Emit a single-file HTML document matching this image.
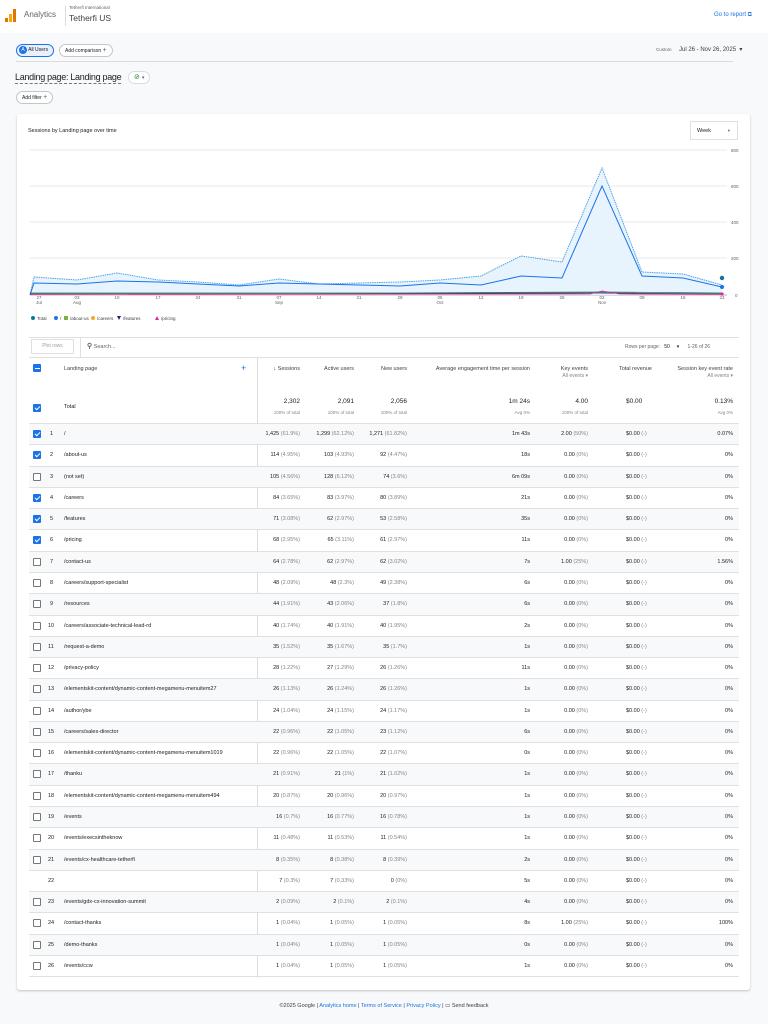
<!DOCTYPE html>
<html><head><meta charset="utf-8"><style>
*{box-sizing:border-box;margin:0;padding:0}
body{width:768px;height:1024px;background:#f8f9fa;font-family:"Liberation Sans",sans-serif;color:#202124;position:relative;overflow:hidden;font-size:6px}
.abs{position:absolute}
.hdr{position:absolute;left:0;top:0;width:768px;height:33px;background:#fff}
.card{position:absolute;left:17px;top:114px;width:733px;height:876px;background:#fff;border-radius:3px;box-shadow:0 1px 2px rgba(60,64,67,.3)}
.chip{position:absolute;height:13px;border:1px solid #c4c7c5;border-radius:7px;font-size:5px;line-height:11px;padding:0 5px;background:#fff;white-space:nowrap}
.row{position:absolute;left:29px;width:710px;height:21.3px;border-bottom:1px solid #e0e0e0;font-size:5.5px;line-height:21px}
.row.s{background:#f8f9fa}
.row span{position:absolute;white-space:nowrap}
.cb{position:absolute;left:4px;top:6px;width:8px;height:8px;border:1px solid #777;border-radius:1px;background:#fff}
.cb.on{background:#1a73e8;border-color:#1a73e8}
.cb.on::after{content:"";position:absolute;left:2px;top:0px;width:2px;height:4px;border:solid #fff;border-width:0 1px 1px 0;transform:rotate(45deg)}
.g{color:#80868b}
.r{text-align:right}
</style></head><body>
<div class="hdr">
 <svg class="abs" style="left:5px;top:9px" width="12" height="14"><rect x="0" y="9" width="3" height="4" fill="#e37400"/><rect x="4" y="5" width="3" height="8" fill="#f9ab00"/><rect x="8" y="0" width="3" height="13" fill="#e37400"/></svg>
 <div class="abs" style="left:24px;top:10px;font-size:8px;color:#5f6368">Analytics</div>
 <div class="abs" style="left:65px;top:6px;width:1px;height:20px;background:#dadce0"></div>
 <div class="abs" style="left:69px;top:5px;font-size:4.5px;color:#5f6368">Tetherfi International</div>
 <div class="abs" style="left:69px;top:13px;font-size:8.5px;color:#3c4043">Tetherfi US</div>
 <div class="abs" style="left:714px;top:12px;font-size:6px;color:#1a73e8">Go to report ⧉</div>
</div>
<div class="chip" style="left:16px;top:44px;background:#e8f0fe;border-color:#1a73e8;padding-left:2px"><span style="display:inline-block;width:8px;height:8px;border-radius:50%;background:#1a73e8;color:#fff;font-size:5px;line-height:8px;text-align:center;vertical-align:middle">A</span> All Users</div>
<div class="chip" style="left:59px;top:44px">Add comparison <span style="color:#5f6368;font-size:7px">+</span></div>
<div class="abs" style="left:656px;top:47px;font-size:4.5px;color:#5f6368">Custom</div>
<div class="abs" style="left:679px;top:46px;font-size:6px;color:#3c4043">Jul 26 - Nov 26, 2025 &nbsp;▾</div>
<div class="abs" style="left:16px;top:61px;width:717px;height:1px;background:#dadce0"></div>
<div class="abs" style="left:15px;top:72px;font-size:9px;letter-spacing:-0.3px;white-space:nowrap;color:#202124;border-bottom:1px dashed #777;line-height:11px">Landing page: Landing page</div>
<div class="chip" style="left:128px;top:71px;font-size:7px;color:#188038;border-color:#dadce0">⊘ <span style="color:#5f6368;font-size:5px">▾</span></div>
<div class="chip" style="left:16px;top:91px">Add filter <span style="color:#5f6368;font-size:7px">+</span></div>

<div class="card"></div>
<div class="abs" style="left:28px;top:128px;font-size:5.5px">Sessions by Landing page over time</div>
<div class="abs" style="left:690px;top:121px;width:48px;height:19px;border:1px solid #e0e0e0;font-size:5.5px;line-height:18px;padding-left:6px">Week <span style="position:absolute;right:7px;color:#5f6368;font-size:4.5px">▾</span></div>
<svg class="abs" style="left:0;top:140px" width="768" height="200">
 <g stroke="#e0e0e0" stroke-width="0.7"><line x1="30" y1="10" x2="727" y2="10"/><line x1="30" y1="46" x2="727" y2="46"/><line x1="30" y1="82" x2="727" y2="82"/><line x1="30" y1="118" x2="727" y2="118"/><line x1="30" y1="155" x2="727" y2="155" stroke="#9aa0a6"/></g>
 <g font-size="4.5" fill="#5f6368" font-family="Liberation Sans"><text x="731" y="12">800</text><text x="731" y="48">600</text><text x="731" y="84">400</text><text x="731" y="120">200</text><text x="735" y="157">0</text></g>
 <path d="M30,155 L34,137 L77,140 L117,133 L158,140 L198,142 L239,145 L279,139 L319,144 L359,143 L400,142 L440,140 L481,136 L521,116 L562,122 L602,28 L642,132 L683,134 L722,145 L722,155 Z" fill="#e8f4fd"/>
 <path d="M30,155 L34,137 L77,140 L117,133 L158,140 L198,142 L239,145 L279,139 L319,144 L359,143 L400,142 L440,140 L481,136 L521,116 L562,122 L602,28 L642,132 L683,134 L722,145" fill="none" stroke="#4fa3e0" stroke-width="1" stroke-dasharray="1.5,0.8"/>
 <path d="M30,155 L34,143 L77,144 L117,141 L158,142 L198,144 L239,146 L279,143 L319,144 L359,145 L400,146 L440,143 L481,145 L521,136 L562,138 L602,46 L642,136 L683,138 L722,147" fill="none" stroke="#1a73e8" stroke-width="1"/>
 <path d="M30,153 L200,153 L400,153 L600,152 L722,153" fill="none" stroke="#188038" stroke-width="0.8"/>
 <path d="M30,154 L300,154 L600,153 L722,154" fill="none" stroke="#1a237e" stroke-width="0.8"/>
 <path d="M30,154.5 L590,154 L602,151 L620,154 L722,154.5" fill="none" stroke="#e52592" stroke-width="0.8"/>
 <circle cx="722" cy="138" r="2.2" fill="#12739e"/><circle cx="722" cy="147" r="2" fill="#1a73e8"/><circle cx="722" cy="154" r="1.6" fill="#e52592"/>
 <g font-size="4.5" fill="#5f6368" font-family="Liberation Sans" text-anchor="middle">
  <text x="39" y="159">27</text><text x="39" y="164">Jul</text><text x="77" y="159">03</text><text x="77" y="164">Aug</text><text x="117" y="159">10</text><text x="158" y="159">17</text><text x="198" y="159">24</text><text x="239" y="159">31</text><text x="279" y="159">07</text><text x="279" y="164">Sep</text><text x="319" y="159">14</text><text x="359" y="159">21</text><text x="400" y="159">28</text><text x="440" y="159">05</text><text x="440" y="164">Oct</text><text x="481" y="159">12</text><text x="521" y="159">19</text><text x="562" y="159">26</text><text x="602" y="159">02</text><text x="602" y="164">Nov</text><text x="642" y="159">09</text><text x="683" y="159">16</text><text x="722" y="159">23</text>
 </g>
 <g font-size="4.5" fill="#3c4043" font-family="Liberation Sans">
  <circle cx="33" cy="178" r="2" fill="#12739e"/><text x="37" y="180">Total</text>
  <circle cx="56" cy="178" r="2" fill="#1a73e8"/><text x="60" y="180">/</text>
  <rect x="64" y="176" width="4" height="4" fill="#7cb342"/><text x="70" y="180">/about-us</text>
  <circle cx="93" cy="178" r="2" fill="#f9a825"/><text x="97" y="180">/careers</text>
  <path d="M117,176 L121,176 L119,180Z" fill="#1a237e"/><text x="123" y="180">/features</text>
  <path d="M155,180 L159,180 L157,176Z" fill="#e52592"/><text x="161" y="180">/pricing</text>
 </g>
</svg>

<div class="abs" style="left:29px;top:337px;width:710px;height:1px;background:#e0e0e0"></div>
<div class="abs" style="left:31px;top:339px;width:43px;height:15px;border:1px solid #e0e0e0;font-size:5px;color:#9aa0a6;line-height:13px;text-align:center">Plot rows</div>
<div class="abs" style="left:80px;top:338px;width:1px;height:20px;background:#e0e0e0"></div>
<div class="abs" style="left:87px;top:342px;font-size:5.5px;color:#5f6368"><b style="font-size:7px">⚲</b> Search...</div>
<div class="abs" style="left:625px;top:344px;font-size:5px;color:#5f6368">Rows per page: &nbsp; <span style="color:#202124">50 &nbsp;&nbsp;&nbsp; ▾</span> &nbsp;&nbsp;&nbsp;&nbsp; 1-26 of 26</div>
<div class="abs" style="left:29px;top:357px;width:710px;height:1px;background:#e0e0e0"></div>
<div class="abs" style="left:257px;top:358px;width:1px;height:620px;background:#dadce0"></div>
<div class="abs" style="left:33px;top:364px;width:8px;height:8px;background:#1a73e8;border-radius:1px"><div style="position:absolute;left:1.5px;top:3.5px;width:5px;height:1px;background:#fff"></div></div>
<div class="abs" style="left:64px;top:366px;font-size:5.5px;color:#3c4043">Landing page</div>
<div class="abs" style="left:241px;top:363px;font-size:9px;color:#1a73e8">+</div>
<div class="abs" style="left:260px;top:366px;width:40px;text-align:right;font-size:5.5px;color:#3c4043"><b>↓</b> Sessions</div>
<div class="abs" style="left:310px;top:366px;width:44px;text-align:right;font-size:5.5px;color:#3c4043">Active users</div>
<div class="abs" style="left:360px;top:366px;width:47px;text-align:right;font-size:5.5px;color:#3c4043">New users</div>
<div class="abs" style="left:420px;top:366px;width:110px;text-align:right;font-size:5.5px;color:#3c4043">Average engagement time per session</div>
<div class="abs" style="left:540px;top:366px;width:48px;text-align:right;font-size:5.5px;color:#3c4043">Key events<br><span class="g" style="font-size:5px;line-height:9px">All events ▾</span></div>
<div class="abs" style="left:600px;top:366px;width:52px;text-align:right;font-size:5.5px;color:#3c4043">Total revenue</div>
<div class="abs" style="left:660px;top:366px;width:73px;text-align:right;font-size:5.5px;color:#3c4043">Session key event rate<br><span class="g" style="font-size:5px;line-height:9px">All events ▾</span></div>

<div class="row" style="top:393px;height:31px;line-height:normal"><div class="cb on" style="top:11px"></div>
<span style="left:35px;top:11px">Total</span>
<span class="r" style="right:439px;top:5px;font-size:6.5px">2,302</span><span class="g r" style="right:439px;top:17px;font-size:4.5px">100% of total</span>
<span class="r" style="right:385px;top:5px;font-size:6.5px">2,091</span><span class="g r" style="right:385px;top:17px;font-size:4.5px">100% of total</span>
<span class="r" style="right:332px;top:5px;font-size:6.5px">2,056</span><span class="g r" style="right:332px;top:17px;font-size:4.5px">100% of total</span>
<span class="r" style="right:209px;top:5px;font-size:6.5px">1m 24s</span><span class="g r" style="right:209px;top:17px;font-size:4.5px">Avg 0%</span>
<span class="r" style="right:151px;top:5px;font-size:6.5px">4.00</span><span class="g r" style="right:151px;top:17px;font-size:4.5px">100% of total</span>
<span style="left:597px;top:5px;font-size:6.5px">$0.00</span>
<span class="r" style="right:6px;top:5px;font-size:6.5px">0.13%</span><span class="g r" style="right:6px;top:17px;font-size:4.5px">Avg 0%</span>
</div>
<div id="rows"></div>
<script>
var d=[
[1,"/","1,425","61.9%","1,299","62.12%","1,271","61.82%","1m 43s","2.00","50%","0.07%",1],
[2,"/about-us","114","4.95%","103","4.93%","92","4.47%","18s","0.00","0%","0%",1],
[3,"(not set)","105","4.56%","128","6.12%","74","3.6%","6m 09s","0.00","0%","0%",0],
[4,"/careers","84","3.65%","83","3.97%","80","3.89%","21s","0.00","0%","0%",1],
[5,"/features","71","3.08%","62","2.97%","53","2.58%","35s","0.00","0%","0%",1],
[6,"/pricing","68","2.95%","65","3.11%","61","2.97%","11s","0.00","0%","0%",1],
[7,"/contact-us","64","2.78%","62","2.97%","62","3.02%","7s","1.00","25%","1.56%",0],
[8,"/careers/support-specialist","48","2.09%","48","2.3%","49","2.38%","6s","0.00","0%","0%",0],
[9,"/resources","44","1.91%","43","2.06%","37","1.8%","6s","0.00","0%","0%",0],
[10,"/careers/associate-technical-lead-rd","40","1.74%","40","1.91%","40","1.95%","2s","0.00","0%","0%",0],
[11,"/request-a-demo","35","1.52%","35","1.67%","35","1.7%","1s","0.00","0%","0%",0],
[12,"/privacy-policy","28","1.22%","27","1.29%","26","1.26%","11s","0.00","0%","0%",0],
[13,"/elementskit-content/dynamic-content-megamenu-menuitem27","26","1.13%","26","1.24%","26","1.26%","1s","0.00","0%","0%",0],
[14,"/author/ybe","24","1.04%","24","1.15%","24","1.17%","1s","0.00","0%","0%",0],
[15,"/careers/sales-director","22","0.96%","22","1.05%","23","1.12%","6s","0.00","0%","0%",0],
[16,"/elementskit-content/dynamic-content-megamenu-menuitem1019","22","0.96%","22","1.05%","22","1.07%","0s","0.00","0%","0%",0],
[17,"/thanku","21","0.91%","21","1%","21","1.02%","1s","0.00","0%","0%",0],
[18,"/elementskit-content/dynamic-content-megamenu-menuitem494","20","0.87%","20","0.96%","20","0.97%","1s","0.00","0%","0%",0],
[19,"/events","16","0.7%","16","0.77%","16","0.78%","1s","0.00","0%","0%",0],
[20,"/events/execsintheknow","11","0.48%","11","0.53%","11","0.54%","1s","0.00","0%","0%",0],
[21,"/events/cx-healthcare-tetherfi","8","0.35%","8","0.38%","8","0.39%","2s","0.00","0%","0%",0],
[22,"","7","0.3%","7","0.33%","0","0%","5s","0.00","0%","0%",2],
[23,"/events/gdx-cx-innovation-summit","2","0.09%","2","0.1%","2","0.1%","4s","0.00","0%","0%",0],
[24,"/contact-thanks","1","0.04%","1","0.05%","1","0.05%","8s","1.00","25%","100%",0],
[25,"/demo-thanks","1","0.04%","1","0.05%","1","0.05%","0s","0.00","0%","0%",0],
[26,"/events/ccw","1","0.04%","1","0.05%","1","0.05%","1s","0.00","0%","0%",0]];
var h="";
d.forEach(function(r,i){var t=424+i*21.28;
h+='<div class="row'+(i%2==0?' s':'')+'" style="top:'+t+'px">'+(r[12]==2?'':'<div class="cb'+(r[12]?' on':'')+'"></div>')+
'<span style="left:'+(r[0]>9?19:21)+'px">'+r[0]+'</span><span style="left:35px">'+r[1]+'</span>'+
'<span class="r" style="right:439px">'+r[2]+' <i class="g" style="font-style:normal">('+r[3]+')</i></span>'+
'<span class="r" style="right:385px">'+r[4]+' <i class="g" style="font-style:normal">('+r[5]+')</i></span>'+
'<span class="r" style="right:332px">'+r[6]+' <i class="g" style="font-style:normal">('+r[7]+')</i></span>'+
'<span class="r" style="right:209px">'+r[8]+'</span>'+
'<span class="r" style="right:151px">'+r[9]+' <i class="g" style="font-style:normal">('+r[10]+')</i></span>'+
'<span style="left:597px">$0.00 <i class="g" style="font-style:normal">(-)</i></span>'+
'<span class="r" style="right:6px">'+r[11]+'</span></div>';});
document.getElementById("rows").innerHTML=h;
</script>
<div class="abs" style="left:0;top:1003px;width:768px;text-align:center;font-size:5.5px;color:#3c4043">©2025 Google | <span style="color:#1a73e8">Analytics home</span> | <span style="color:#1a73e8">Terms of Service</span> | <span style="color:#1a73e8">Privacy Policy</span> | ▭ Send feedback</div>
</body></html>
